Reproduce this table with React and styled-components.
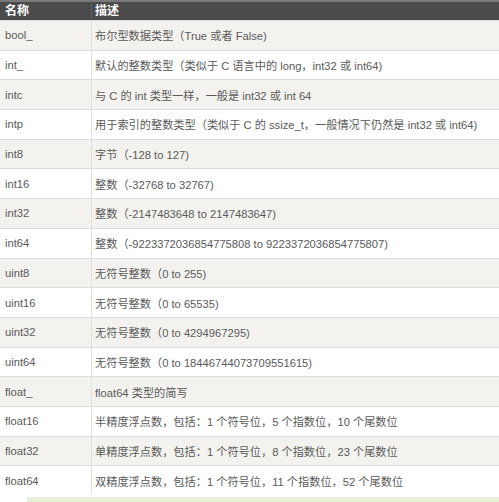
import React from "react";
import styled, { createGlobalStyle } from "styled-components";

const GlobalStyle = createGlobalStyle`
  html, body {
    margin: 0;
    padding: 0;
    background: #ffffff;
  }
  body {
    font-family: "Liberation Sans", "Noto Sans CJK SC", sans-serif;
  }
`;

const rows = [
  ["bool_", "布尔型数据类型（True 或者 False)"],
  ["int_", "默认的整数类型（类似于 C 语言中的 long，int32 或 int64)"],
  ["intc", "与 C 的 int 类型一样，一般是 int32 或 int 64"],
  ["intp", "用于索引的整数类型（类似于 C 的 ssize_t，一般情况下仍然是 int32 或 int64)"],
  ["int8", "字节（-128 to 127)"],
  ["int16", "整数（-32768 to 32767)"],
  ["int32", "整数（-2147483648 to 2147483647)"],
  ["int64", "整数（-9223372036854775808 to 9223372036854775807)"],
  ["uint8", "无符号整数（0 to 255)"],
  ["uint16", "无符号整数（0 to 65535)"],
  ["uint32", "无符号整数（0 to 4294967295)"],
  ["uint64", "无符号整数（0 to 18446744073709551615)"],
  ["float_", "float64 类型的简写"],
  ["float16", "半精度浮点数，包括：1 个符号位，5 个指数位，10 个尾数位"],
  ["float32", "单精度浮点数，包括：1 个符号位，8 个指数位，23 个尾数位"],
  ["float64", "双精度浮点数，包括：1 个符号位，11 个指数位，52 个尾数位"],
];

const Page = styled.div`
  width: 499px;
  height: 502px;
  overflow: hidden;
  display: flex;
  flex-direction: column;
`;

const Table = styled.div`
  display: grid;
  grid-template-columns: 91px 1fr;
`;

const HeadCell = styled.div`
  height: 18px;
  background: #4b4b4b;
  border-top: 2px solid #7a7a7a;
  border-left: ${(p) => (p.$first ? "none" : "1px solid #5e5e5e")};
  color: #ffffff;
  font-weight: bold;
  font-size: 12px;
  line-height: 18px;
  padding-left: ${(p) => (p.$first ? "5px" : "3px")};
`;

const Cell = styled.div`
  height: 29.7px;
  box-sizing: border-box;
  background: ${(p) => (p.$odd ? "#f3f2ee" : "#ffffff")};
  border-top: 1px solid #dedddb;
  border-left: ${(p) => (p.$first ? "none" : "1px solid #e0dfdc")};
  color: #5a5a5a;
  font-size: 11.2px;
  display: flex;
  align-items: center;
  padding-left: ${(p) => (p.$first ? "5px" : "3px")};
  white-space: nowrap;
`;

const Footer = styled.div`
  flex: 1;
  display: flex;
  align-items: flex-end;
`;

const GreenStrip = styled.div`
  margin-left: 27px;
  flex: 1;
  height: 5px;
  background: #e6efd8;
`;

export default function App() {
  return (
    <Page>
      <GlobalStyle />
      <Table>
        <HeadCell $first>名称</HeadCell>
        <HeadCell>描述</HeadCell>
        {rows.map(([name, desc], i) => (
          <React.Fragment key={name}>
            <Cell $first $odd={i % 2 === 0}>{name}</Cell>
            <Cell $odd={i % 2 === 0}>{desc}</Cell>
          </React.Fragment>
        ))}
      </Table>
      <Footer>
        <GreenStrip />
      </Footer>
    </Page>
  );
}
